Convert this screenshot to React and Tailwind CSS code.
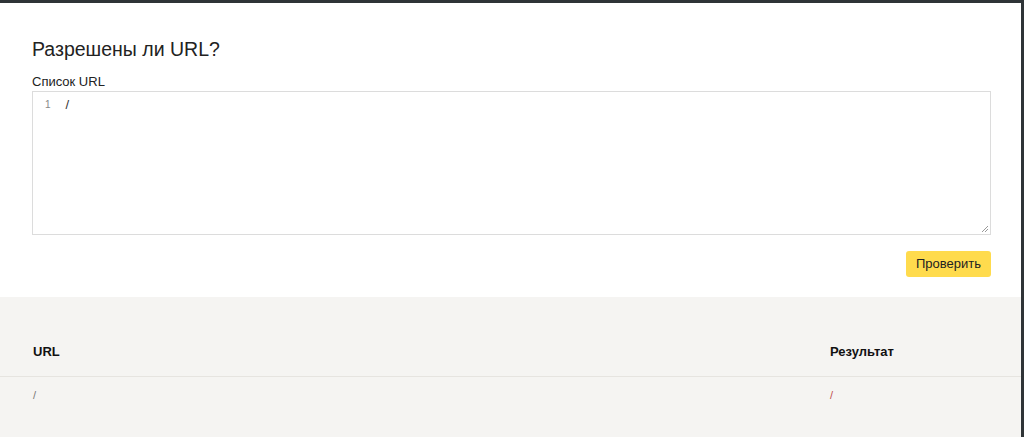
import React from "react";

const rows = [{ url: "/", result: "/" }];

const App = () => {
  return (
    <div
      className="flex h-[437px] w-[1024px] overflow-hidden bg-[#2f3437]"
      style={{ fontFamily: '"Liberation Sans", Arial, sans-serif' }}
    >
      <div className="mt-[3px] flex w-[1021px] flex-col">
        {/* form */}
        <div className="h-[294px] bg-white px-[32px] pt-[34px]">
          <h1 className="text-[19.5px] leading-[24px] text-[#222]">Разрешены ли URL?</h1>
          <label className="mt-[13px] block text-[13px] leading-[16px] text-[#222]">Список URL</label>
          <div className="relative mt-[1px] h-[144px] w-[959px] border border-[#dcdcdc] bg-white">
            <div className="flex items-center pt-[6px] text-[#333]">
              <span className="pl-[12px] text-[10px] leading-[14px] text-[#888]">1</span>
              <span className="ml-[15px] text-[13px] leading-[14px]">/</span>
            </div>
            <svg className="absolute bottom-[1px] right-[1px]" width="8" height="8" viewBox="0 0 8 8">
              <path d="M7 1 L1 7 M7 4 L4 7" stroke="#999" strokeWidth="1" />
            </svg>
          </div>
          <div className="flex w-[959px] justify-end pt-[16px]">
            <button className="h-[26px] rounded-[3px] bg-[#ffdb4d] px-[10px] text-[13px] text-[#222]">
              Проверить
            </button>
          </div>
        </div>
        {/* results */}
        <div className="flex-1 bg-[#f5f4f2]">
          <div className="flex h-[79px] items-end pb-[15px] text-[13px] font-bold text-[#111]">
            <div className="w-[830px] pl-[33px]">URL</div>
            <div>Результат</div>
          </div>
          <div className="border-t border-[#e6e4e0]" />
          {rows.map((r, i) => (
            <div key={i} className="flex pt-[10px] text-[11px]">
              <div className="w-[830px] pl-[33px] text-[#777]">{r.url}</div>
              <div className="text-[#c0504d]">{r.result}</div>
            </div>
          ))}
        </div>
      </div>
    </div>
  );
};

export default App;
